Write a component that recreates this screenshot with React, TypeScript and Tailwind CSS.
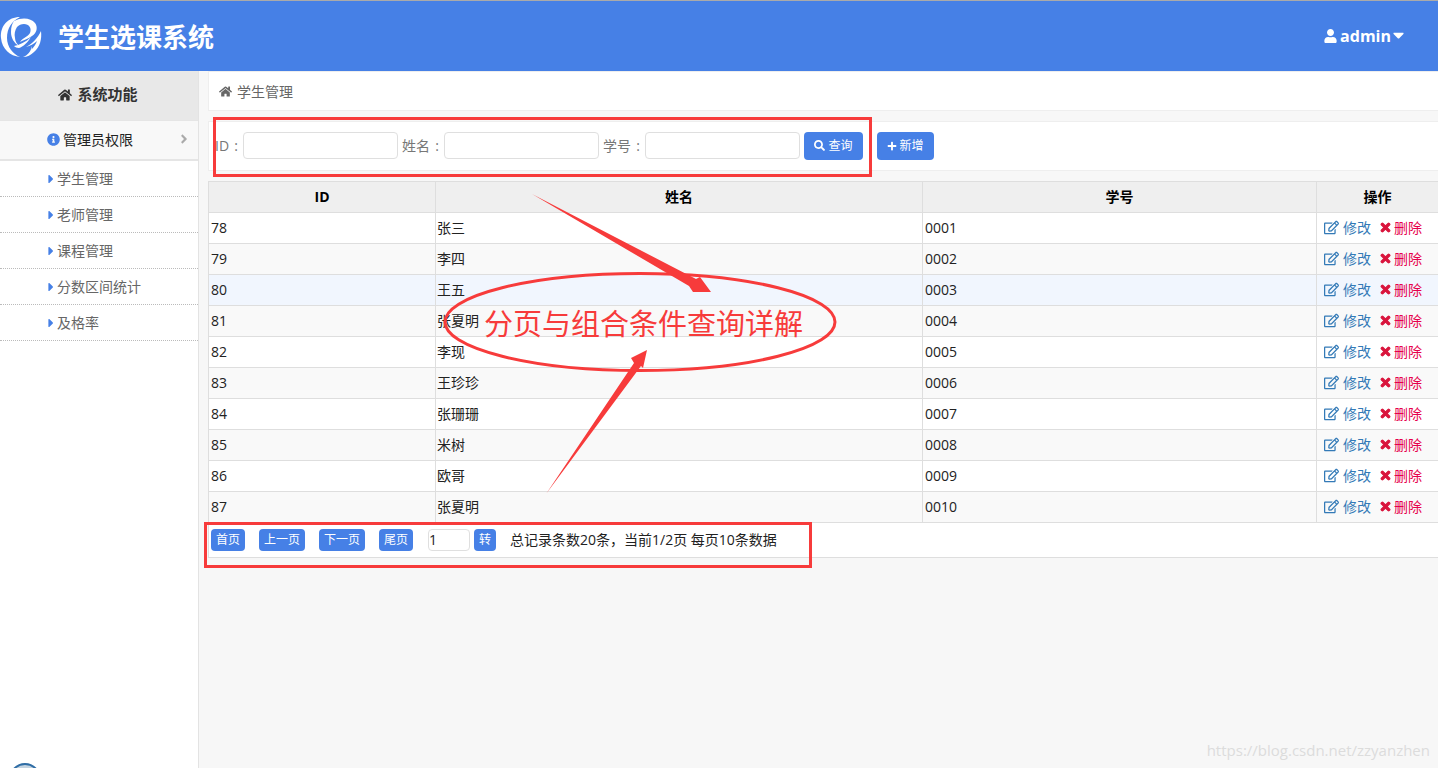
import { FaAngleRight, FaCaretDown, FaCaretRight, FaHome, FaInfoCircle, FaPlus, FaRegEdit, FaSearch, FaTimes, FaUser } from "react-icons/fa";

const font = { fontFamily: '"Open Sans", "Noto Sans CJK SC", sans-serif' };

const menu = ["学生管理", "老师管理", "课程管理", "分数区间统计", "及格率"];

const students = [
    { id: 78, name: "张三", no: "0001" },
    { id: 79, name: "李四", no: "0002" },
    { id: 80, name: "王五", no: "0003" },
    { id: 81, name: "张夏明", no: "0004" },
    { id: 82, name: "李现", no: "0005" },
    { id: 83, name: "王珍珍", no: "0006" },
    { id: 84, name: "张珊珊", no: "0007" },
    { id: 85, name: "米树", no: "0008" },
    { id: 86, name: "欧哥", no: "0009" },
    { id: 87, name: "张夏明", no: "0010" },
];

const Logo = () => (
    <svg width="42" height="42" viewBox="0 0 42 42" fill="none">
        {/* outer crescent */}
        <path d="M20 1C8 1 0 10 1 22c1 11 9 18 19 19-7-3-13-10-13-19C7 12 12 5 20 1z" fill="#fff" />
        {/* top swirl */}
        <path d="M14 5c8-4 17-3 21 2 3 4 2 10-3 13-4 3-9 4-12 6 2-4 8-5 10-9 2-5-1-9-6-9-3 0-5 1-7 3-2 3-3 7-2 11 0 3 2 6 4 8-5-3-8-8-8-14 0-5 1-8 3-11z" fill="#fff" />
        {/* right tail */}
        <path d="M41 15c1 8-1 16-7 21-3 3-7 5-11 5 5-2 8-6 9-11 0 2 0 3-1 4 3-3 5-6 6-9-3 3-7 5-11 6 6-3 12-9 15-16z" fill="#fff" />
        <path d="M14 30c5-1 12-4 17-9-3 5-8 10-12 11-2 0-4-1-5-2z" fill="#fff" />
    </svg>
);

const SearchField = ({ label, labelWidth, indent }: { label: string; labelWidth: string; indent?: string }) => (
    <div className="flex items-center">
        <span className={`${labelWidth} flex text-[14px] text-[#777]`}>
            <span className={`flex-1 ${indent ?? ""}`}>{label}</span>
            <span className="w-[14px] text-center">:</span>
        </span>
        <input className="w-[155px] h-[27px] border border-[#dfdfdf] rounded bg-white" />
    </div>
);

const PagerButton = ({ text, width }: { text: string; width: string }) => (
    <button className={`${width} h-[22px] rounded bg-[#4680e6] text-white text-[12px] flex items-center justify-center`}>{text}</button>
);

export default function App() {
    return (
        <div style={font} className="relative w-[1438px] h-[768px] overflow-hidden bg-[#f7f7f7] border-t border-[#aaaaaa]">
            <header className="h-[70px] bg-[#4680e6] flex items-center text-white">
                <div className="ml-0 mt-[2px] w-[58px]"><Logo /></div>
                <h1 className="mt-[2px] text-[26px] font-bold leading-none">学生选课系统</h1>
                <div className="ml-auto mr-[34px] flex items-center text-[16px] font-bold">
                    <FaUser className="text-[13px] w-[13px] h-[14px] mr-[3px]" />
                    admin
                    <FaCaretDown className="ml-[2px] w-[11px] h-[18px] -mt-[3px]" />
                </div>
            </header>
            <div className="flex h-[697px]">
                <aside className="relative w-[199px] shrink-0 bg-white border-r border-[#e3e3e3] overflow-hidden">
                    <div className="h-[49px] bg-[#e8e8e8] flex items-center justify-center text-[15px] font-bold text-[#333] pr-[2px] pb-[2px]">
                        <FaHome className="text-[14px] mr-[5px]" />系统功能
                    </div>
                    <div className="relative h-[41px] bg-[#f8f8f8] border-t border-b-2 border-[#e5e5e5] flex items-center pl-[47px] pb-[2px] text-[14px] text-[#222]">
                        <FaInfoCircle className="text-[13px] text-[#4680e6] mr-[3px]" />管理员权限
                        <FaAngleRight className="absolute right-[7px] text-[14px] text-[#aaa]" />
                    </div>
                    {menu.map((item) => (
                        <div key={item} className="h-[36px] border-b border-dotted border-[#bbb] flex items-center pl-[45px] text-[14px] text-[#666]">
                            <FaCaretRight className="text-[#4680e6] w-[12px] h-[14px]" />{item}
                        </div>
                    ))}
                    <div className="absolute left-[9px] top-[692px] w-[32px] h-[32px] rounded-full bg-[#c3d3e0] border-2 border-[#2f6da5]" />
                </aside>
                <main className="flex-1 pl-[9px]">
                    <div className="h-[40px] bg-white border border-r-0 border-[#eeeeee] flex items-center pl-[10px] pt-[1px] text-[14px] text-[#666]">
                        <FaHome className="text-[13px] mr-[5px]" />学生管理
                    </div>
                    <div className="mt-[10px] h-[50px] bg-white border border-r-0 border-[#eeeeee] flex items-center pl-[4px] pb-[2px]">
                        <SearchField label="ID" labelWidth="w-[30px]" indent="pl-[2px]" />
                        <div className="ml-[4px]"><SearchField label="姓名" labelWidth="w-[42px]" /></div>
                        <div className="ml-[4px]"><SearchField label="学号" labelWidth="w-[42px]" /></div>
                        <button className="ml-[4px] mt-[1px] w-[59px] h-[28px] rounded bg-[#4680e6] text-white text-[12px] flex items-center justify-center">
                            <FaSearch className="text-[11px] mr-[3px]" />查询
                        </button>
                        <button className="ml-[14px] mt-[1px] w-[57px] h-[28px] rounded bg-[#4680e6] text-white text-[12px] flex items-center justify-center">
                            <FaPlus className="text-[10px] mr-[2px]" />新增
                        </button>
                    </div>
                    <table className="mt-[10px] w-[1230px] table-fixed border-collapse text-[14px] text-[#222]">
                        <colgroup>
                            <col className="w-[227px]" />
                            <col className="w-[487px]" />
                            <col className="w-[394px]" />
                            <col className="w-[122px]" />
                        </colgroup>
                        <thead>
                            <tr className="h-[31px] bg-[#efefef]">
                                {["ID", "姓名", "学号", "操作"].map((h) => (
                                    <th key={h} className="border border-[#dedede] pb-[2px] text-center font-bold text-black">{h}</th>
                                ))}
                            </tr>
                        </thead>
                        <tbody>
                            {students.map((s, i) => (
                                <tr key={s.id} className={`h-[31px] ${s.id === 80 ? "bg-[#f1f6fe]" : i % 2 ? "bg-[#f9f9f9]" : "bg-white"}`}>
                                    <td className="border border-[#dedede] pl-[2px] pb-[2px]">{s.id}</td>
                                    <td className="border border-[#dedede] pl-[1px] pb-[2px]">{s.name}</td>
                                    <td className="border border-[#dedede] pl-[2px] pb-[2px]">{s.no}</td>
                                    <td className="border border-[#dedede] pl-[7px] pb-[2px]">
                                        <div className="flex items-center">
                                            <span className="flex items-center text-[#337ab7]"><FaRegEdit className="text-[15px] mr-[4px]" />修改</span>
                                            <span className="ml-[8px] flex items-center text-[#e6004c]"><FaTimes className="text-[#d9143c] text-[13px] stroke-[40px] mr-[2px]" />删除</span>
                                        </div>
                                    </td>
                                </tr>
                            ))}
                        </tbody>
                    </table>
                    <div className="h-[35px] bg-white border border-t-0 border-[#dedede] flex items-center pl-[2px] pb-[1px] text-[14px] text-[#222]">
                        <PagerButton text="首页" width="w-[34px]" />
                        <div className="ml-[14px]"><PagerButton text="上一页" width="w-[46px]" /></div>
                        <div className="ml-[14px]"><PagerButton text="下一页" width="w-[46px]" /></div>
                        <div className="ml-[14px]"><PagerButton text="尾页" width="w-[34px]" /></div>
                        <input defaultValue="1" className="ml-[15px] w-[42px] h-[22px] border border-[#dfdfdf] rounded bg-white text-[14px] px-0" />
                        <div className="ml-[4px]"><PagerButton text="转" width="w-[22px]" /></div>
                        <span className="ml-[14px]">总记录条数20条，当前1/2页 每页10条数据</span>
                    </div>
                </main>
            </div>

            {/* annotations drawn on top of the screenshot */}
            <div className="absolute left-[213px] top-[116px] w-[659px] h-[60px] border-[3px] border-[#f73b3b]" />
            <div className="absolute left-[204px] top-[521px] w-[608px] h-[46px] border-[3px] border-[#f73b3b]" />
            <svg className="absolute left-0 top-[-1px]" width="1438" height="768" fill="none">
                <ellipse cx="640" cy="322" rx="195" ry="48.5" stroke="#f73b3b" strokeWidth="3" />
                <polygon points="532,194 696,279 700,277 711,292 693,292 689,286" fill="#f73b3b" />
                <polygon points="546,494 634,363 631,358 647,350 643,368 641,366" fill="#f73b3b" />
            </svg>
            <div className="absolute left-[484px] top-[303px] text-[29px] leading-[40px] text-[#f73b3b] whitespace-nowrap">分页与组合条件查询详解</div>
            <div className="absolute right-[8px] bottom-[10px] text-[15px] leading-none text-[#dcdcdc]">https://blog.csdn.net/zzyanzhen</div>
        </div>
    );
}
